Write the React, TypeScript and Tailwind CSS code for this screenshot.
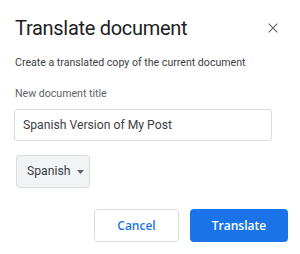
import React from "react";

const TranslateDialog: React.FC = () => {
  return (
    <div className="w-[300px] h-[254px] bg-white font-['Roboto',sans-serif] relative">
      <div className="flex items-start justify-between pl-[15px] pr-[21px] pt-[14px]">
        <h1 className="text-[20px] leading-[28px] tracking-[-0.3px] text-[#202124] font-['Roboto',sans-serif]">
          Translate document
        </h1>
        <button className="mt-[9px] mr-[1px] text-[#5f6368]">
          <svg width="10" height="10" viewBox="0 0 10 10" fill="none" stroke="currentColor" strokeWidth="1.1">
            <path d="M0.7 0.7l8.6 8.6M9.3 0.7l-8.6 8.6" />
          </svg>
        </button>
      </div>
      <p className="pl-[15px] mt-[14px] text-[10.6px] leading-[14px] text-[#3c4043]">
        Create a translated copy of the current document
      </p>
      <p className="pl-[15px] mt-[17px] text-[10.6px] leading-[14px] text-[#5f6368]">New document title</p>
      <div className="ml-[14px] mt-[8px] w-[258px] h-[32px] border border-[#dadce0] rounded-[3px] flex items-center px-[8px] text-[12.2px] text-[#3c4043]">
        Spanish Version of My Post
      </div>
      <div className="ml-[16px] mt-[14px] w-[74px] h-[33px] bg-[#f1f3f4] border border-[#dadce0] rounded-[3px] flex items-center pl-[10px] gap-[7px] text-[12.2px] text-[#3c4043]">
        Spanish
        <svg width="7" height="4" viewBox="0 0 7 4">
          <path d="M0 0h7L3.5 4z" fill="#5f6368" />
        </svg>
      </div>
      <div className="flex justify-end gap-[11px] pr-[12px] mt-[21px]">
        <button className="w-[85px] h-[33px] border border-[#dadce0] rounded-[4px] bg-white text-[12px] font-semibold text-[#1a73e8] font-['Open_Sans',sans-serif]">
          Cancel
        </button>
        <button className="w-[98px] h-[33px] rounded-[4px] bg-[#1a73e8] text-[12px] font-semibold text-white font-['Open_Sans',sans-serif]">
          Translate
        </button>
      </div>
    </div>
  );
};

export default function App() {
  return <TranslateDialog />;
}
